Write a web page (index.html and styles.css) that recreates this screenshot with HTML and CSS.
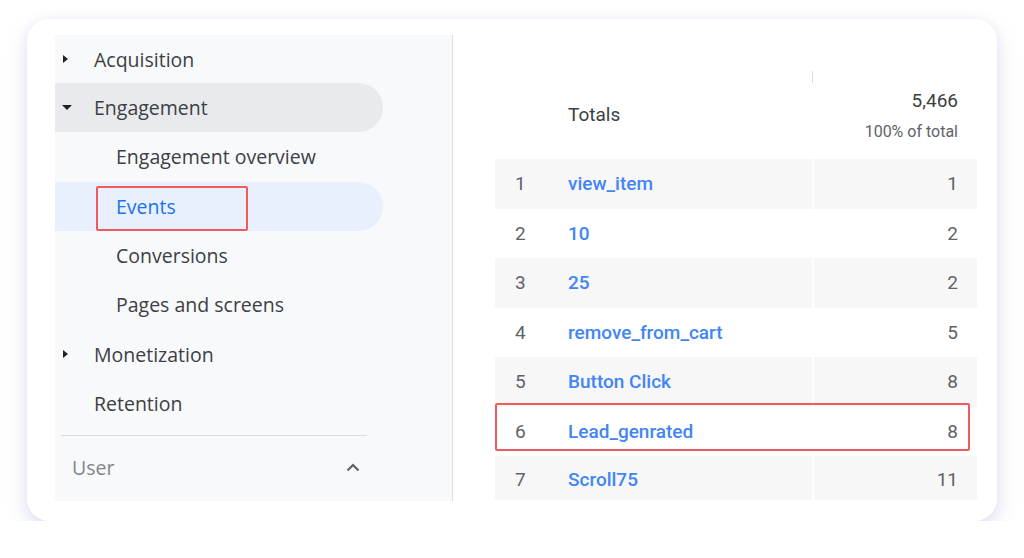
FILE: index.html
```html
<!DOCTYPE html>
<html lang="en">
<head>
    <meta charset="UTF-8">
    <title>Events report</title>
    <link rel="stylesheet" href="styles.css">
</head>
<body>
    <div class="card">
        <!-- Report navigation -->
        <nav class="sidebar">
            <div class="nav-item top first"><span class="caret right"></span>Acquisition</div>
            <div class="nav-item top open"><span class="caret down"></span>Engagement</div>
            <div class="nav-item sub">Engagement overview</div>
            <div class="nav-item sub active">Events<span class="mark events-mark"></span></div>
            <div class="nav-item sub">Conversions</div>
            <div class="nav-item sub">Pages and screens</div>
            <div class="nav-item top"><span class="caret right"></span>Monetization</div>
            <div class="nav-item top">Retention</div>
            <div class="nav-divider"></div>
            <div class="nav-section">
                <span>User</span>
                <svg class="chevron" width="14" height="9" viewBox="0 0 14 9">
                    <path d="M1.5 7.5 L7 2 L12.5 7.5" fill="none" stroke="#5f6368" stroke-width="2.2"/>
                </svg>
            </div>
        </nav>

        <!-- Events table -->
        <section class="report">
            <div class="table">
                <div class="row head">
                    <div class="cell num"></div>
                    <div class="cell name">Totals</div>
                    <div class="cell value">
                        <span class="tick"></span>
                        <span class="total">5,466</span>
                        <span class="share">100% of total</span>
                    </div>
                </div>
                <div class="row odd"><div class="cell num">1</div><div class="cell name">view_item</div><div class="cell value">1</div></div>
                <div class="row"><div class="cell num">2</div><div class="cell name">10</div><div class="cell value">2</div></div>
                <div class="row odd"><div class="cell num">3</div><div class="cell name">25</div><div class="cell value">2</div></div>
                <div class="row"><div class="cell num">4</div><div class="cell name">remove_from_cart</div><div class="cell value">5</div></div>
                <div class="row odd"><div class="cell num">5</div><div class="cell name">Button Click</div><div class="cell value">8</div></div>
                <div class="row marked"><div class="cell num">6</div><div class="cell name">Lead_genrated</div><div class="cell value">8</div><span class="mark row-mark"></span></div>
                <div class="row odd last"><div class="cell num">7</div><div class="cell name">Scroll75</div><div class="cell value">11</div></div>
            </div>
        </section>
    </div>
</body>
</html>
```

FILE: styles.css
```css
body {
    margin: 0;
    background: #ffffff;
    font-family: Roboto, "Noto Sans", sans-serif;
    color: #3c4043;
}

.card {
    display: flex;
    width: 922px;
    height: 466px;
    margin: 19px 0 0 27px;
    padding: 16px 20px 20px 28px;
    background: #ffffff;
    border-radius: 22px;
    box-shadow: 0 10px 22px rgba(110, 120, 190, 0.2), 0 0 10px rgba(110, 120, 190, 0.1);
}

/* sidebar */
.sidebar {
    flex: none;
    width: 397px;
    background: #f8f9fb;
    border-right: 1px solid #dfe1e5;
    font-family: "Open Sans", Roboto, sans-serif;
    font-size: 19.5px;
    font-weight: 500;
}
.nav-item {
    position: relative;
    display: flex;
    align-items: center;
    width: 328px;
    height: 49.3px;
    box-sizing: border-box;
    border-radius: 0 25px 25px 0;
    color: #3c4043;
}
.nav-item.first {
    height: 48px;
}
.nav-item.top {
    padding-left: 39px;
}
.nav-item.sub {
    padding-left: 61px;
}
.nav-item.open {
    background: #e8eaed;
}
.nav-item.active {
    background: #e8f0fe;
    color: #1a73e8;
}
.caret {
    position: absolute;
    left: 7px;
    width: 0;
    height: 0;
}
.caret.right {
    border-top: 4.5px solid transparent;
    border-bottom: 4.5px solid transparent;
    border-left: 5.5px solid #202124;
    left: 8px;
}
.caret.down {
    border-left: 5px solid transparent;
    border-right: 5px solid transparent;
    border-top: 5.5px solid #202124;
}
.nav-divider {
    height: 1px;
    margin: 7px 85px 0 6px;
    background: #dadce0;
}
.nav-section {
    display: flex;
    align-items: center;
    justify-content: space-between;
    height: 62px;
    padding: 0 92px 0 17px;
    color: #80868b;
}

/* red highlight boxes */
.mark {
    position: absolute;
    border: 2px solid #ef5a5f;
    border-radius: 2px;
    box-sizing: border-box;
}
.events-mark {
    left: 41px;
    top: 4px;
    width: 152px;
    height: 45px;
}
.row-mark {
    left: 0;
    top: -4px;
    width: 475px;
    height: 48px;
}

/* report table */
.report {
    flex: 1;
    padding-left: 42px;
}
.table {
    font-size: 19px;
}
.row {
    position: relative;
    display: grid;
    grid-template-columns: 73px 244px 165px;
    height: 49.5px;
    align-items: center;
}
.row.odd .cell {
    background: #f7f7f8;
    height: 100%;
    display: flex;
    align-items: center;
}
.row.last {
    height: 44px;
}
.row.last .cell {
    padding-top: 2px;
    box-sizing: border-box;
}
.cell.num {
    padding-left: 20px;
    color: #5f6368;
}
.cell.name {
    color: #4285f4;
    font-weight: 500;
}
.cell.value {
    justify-content: flex-end;
    text-align: right;
    padding-right: 19px;
    color: #5f6368;
}
.row.odd .cell.value {
    border-left: 2px solid #ffffff;
}
.row.head {
    height: 124px;
    align-items: start;
}
.row.head .cell.name {
    color: #3c4043;
    font-weight: 400;
    margin-top: 68px;
}
.row.head .cell.value {
    position: relative;
    display: flex;
    flex-direction: column;
    align-items: flex-end;
    padding-top: 54px;
}
.tick {
    position: absolute;
    left: 0;
    top: 36px;
    width: 1px;
    height: 12px;
    background: #dadce0;
}
.total {
    color: #3c4043;
}
.share {
    margin-top: 10px;
    font-size: 16px;
    color: #5f6368;
}
```
